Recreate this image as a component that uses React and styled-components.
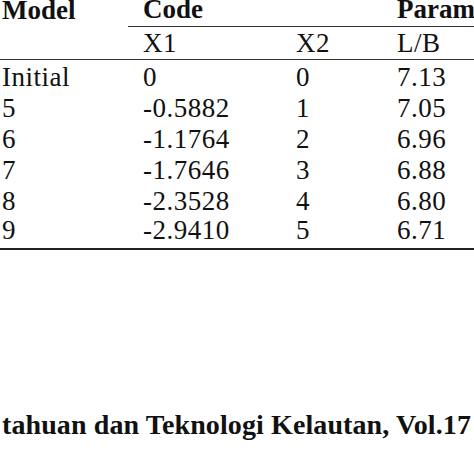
import React from "react";
import styled, { createGlobalStyle } from "styled-components";

const Global = createGlobalStyle`
  html, body { margin: 0; padding: 0; background: #fff; }
  body { width: 474px; height: 474px; overflow: hidden; }
`;

const Page = styled.div`
  width: 474px;
  height: 474px;
  overflow: hidden;
  background: #fff;
  color: #111;
  font-family: "Liberation Serif", "Times New Roman", serif;
  font-size: 27px;
`;

const Grid = styled.div`
  display: grid;
  grid-template-columns: 128px 153px 101px minmax(0, 1fr);
  white-space: nowrap;
`;

const Cell = styled.div`
  padding-left: ${(p) => (p.$first ? "2px" : "15px")};
  height: ${(p) => p.$h}px;
  line-height: 1;
  display: flex;
  align-items: flex-end;
  padding-bottom: ${(p) => p.$pb ?? 0}px;
  box-sizing: border-box;
  font-weight: ${(p) => (p.$bold ? 700 : 400)};
  letter-spacing: ${(p) => (p.$bold ? "0" : "0.5px")};
  grid-column: ${(p) => p.$span || "auto"};
  border-bottom: ${(p) => p.$line || "none"};
  min-width: 0;
`;

const Footer = styled.div`
  margin-top: 161px;
  padding-left: 2px;
  font-weight: 700;
  font-size: 28px;
  line-height: 1;
  letter-spacing: 0.1px;
  white-space: nowrap;
`;

const rows = [
  ["Initial", "0", "0", "7.13"],
  ["5", "-0.5882", "1", "7.05"],
  ["6", "-1.1764", "2", "6.96"],
  ["7", "-1.7646", "3", "6.88"],
  ["8", "-2.3528", "4", "6.80"],
  ["9", "-2.9410", "5", "6.71"],
];

const thin = "1.5px solid #333";
const thick = "2px solid #222";

export default function App() {
  return (
    <Page>
      <Global />
      <Grid>
        <Cell $first $bold $h={27} $pb={3}>Model</Cell>
        <Cell $bold $h={27} $pb={3} $span="span 2" $line={thin}>Code</Cell>
        <Cell $bold $h={27} $pb={3} $line={thin}>Parameters</Cell>

        <Cell $first $h={33} $pb={2} $line={thin}></Cell>
        <Cell $h={33} $pb={2} $line={thin}>X1</Cell>
        <Cell $h={33} $pb={2} $line={thin}>X2</Cell>
        <Cell $h={33} $pb={2} $line={thin}>L/B</Cell>

        {rows.map((r, i) => {
          const last = i === rows.length - 1;
          const h = last ? 35 : 31;
          const pb = last ? 4 : 0;
          return r.map((v, j) => (
            <Cell
              key={`${i}-${j}`}
              $first={j === 0}
              $h={h}
              $pb={pb}
              $line={last ? thick : undefined}
            >
              {v}
            </Cell>
          ));
        })}
      </Grid>
      <Footer>tahuan dan Teknologi Kelautan, Vol.17</Footer>
    </Page>
  );
}
